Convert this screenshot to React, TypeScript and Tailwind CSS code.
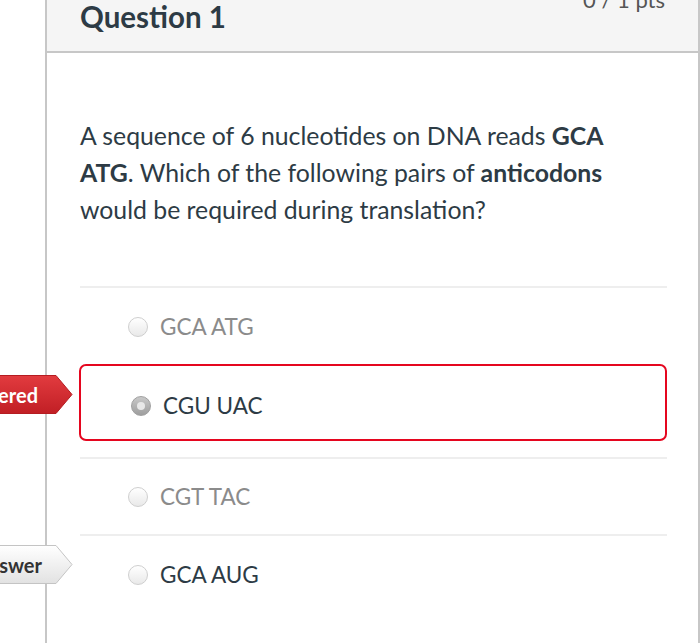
import React from 'react';

type TagProps = { text: string; top: number; variant: 'wrong' | 'correct' };

function Tag({ text, top, variant }: TagProps) {
  const red = variant === 'wrong';
  return (
    <div className="absolute left-[-130px] w-[203px] h-[39px] z-10" style={{ top }}>
      <svg className="absolute inset-0" width="203" height="39" viewBox="0 0 203 39">
        <defs>
          <linearGradient id={`g-${variant}`} x1="0" y1="0" x2="0" y2="1">
            <stop offset="0" stopColor={red ? '#e23b3f' : '#ffffff'} />
            <stop offset="1" stopColor={red ? '#c11f25' : '#e2e2e2'} />
          </linearGradient>
        </defs>
        <polygon
          points="0.5,0.5 186,0.5 202,19.5 186,38.5 0.5,38.5"
          fill={`url(#g-${variant})`}
          stroke={red ? '#b51c21' : '#c4c4c4'}
          strokeWidth="1"
        />
      </svg>
      <span
        className={`absolute top-0 h-full flex items-center text-[20px] font-bold ${red ? 'text-white' : 'text-[#333333]'}`}
        style={{ right: red ? 35 : 31 }}
      >
        {text}
      </span>
    </div>
  );
}

function Radio({ checked }: { checked?: boolean }) {
  if (checked) {
    return (
      <span className="w-[20px] h-[20px] rounded-full bg-gradient-to-b from-[#c9c9c9] to-[#9e9e9e] border border-[#a0a0a0] flex items-center justify-center shrink-0">
        <span className="w-[8px] h-[8px] rounded-full bg-[#e8e8e8]" />
      </span>
    );
  }
  return (
    <span className="w-[20px] h-[20px] rounded-full bg-gradient-to-b from-[#ffffff] to-[#e9e9e9] border border-[#cfcfcf] shrink-0" />
  );
}

export default function App() {
  return (
    <div
      className="relative h-[643px] w-[700px] overflow-hidden bg-white text-[#2d3b45]"
      style={{ fontFamily: 'Lato, "Open Sans", sans-serif' }}
    >
      <Tag text="You Answered" top={375} variant="wrong" />
      <Tag text="Correct Answer" top={545} variant="correct" />

      <div className="ml-[45px] w-[655px] h-full border-l-2 border-r-2 border-[#c7c7c7]">
        <div className="h-[53px] bg-[#f5f5f5] border-b-2 border-[#c7c7c7] flex justify-between pl-[33px] pr-[33px]">
          <h2 className="text-[29.5px] font-bold leading-[36px] mt-[-1px] text-[#2d3b45]">Question 1</h2>
          <span className="text-[22px] leading-[24px] mt-[-12px] text-[#555555]">0 / 1 pts</span>
        </div>

        <div className="pl-[33px] pr-[31px] pt-[64px]">
          <p className="w-[545px] text-[24.8px] leading-[37px]">
            A sequence of 6 nucleotides on DNA reads <b>GCA ATG</b>. Which of the following pairs of{' '}
            <b>anticodons</b> would be required during translation?
          </p>

          <div className="mt-[58px] border-t-2 border-[#eeeeee]">
            <div className="h-[76px] flex items-center gap-[12px] pl-[48px] pt-[2px]">
              <Radio />
              <span className="text-[22.5px] text-[#8b8b8b]">GCA ATG</span>
            </div>

            <div className="h-[77px] -ml-[1px] border-2 border-[#e5061f] rounded-[7px] flex items-center gap-[12px] pl-[50px] pt-[6px]">
              <Radio checked />
              <span className="text-[22.5px] text-[#2d3b45]">CGU UAC</span>
            </div>

            <div className="mt-[16px] border-t-2 border-[#eeeeee] h-[77px] flex items-center gap-[12px] pl-[48px]">
              <Radio />
              <span className="text-[22.5px] text-[#8b8b8b]">CGT TAC</span>
            </div>

            <div className="border-t-2 border-[#eeeeee] h-[80px] flex items-center gap-[12px] pl-[48px]">
              <Radio />
              <span className="text-[22.5px] text-[#2d3b45]">GCA AUG</span>
            </div>
          </div>
        </div>
      </div>
    </div>
  );
}
